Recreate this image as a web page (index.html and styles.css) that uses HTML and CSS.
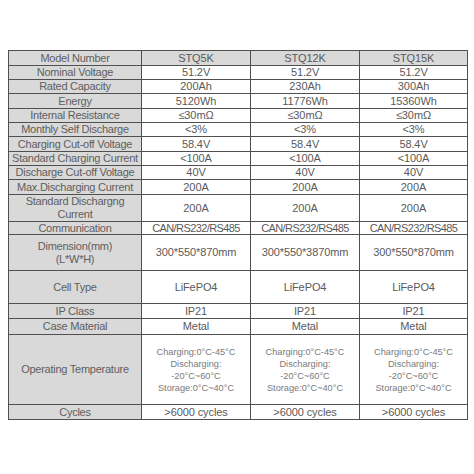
FILE: index.html
```html
<!DOCTYPE html>
<html>
<head>
<meta charset="utf-8">
<link rel="stylesheet" href="styles.css">
</head>
<body>
<div class="spec">
  <div class="c h k r1">Model Number</div><div class="c h r1">STQ5K</div><div class="c h r1">STQ12K</div><div class="c h r1">STQ15K</div>
  <div class="c k">Nominal Voltage</div><div class="c">51.2V</div><div class="c">51.2V</div><div class="c">51.2V</div>
  <div class="c k">Rated Capacity</div><div class="c">200Ah</div><div class="c">230Ah</div><div class="c">300Ah</div>
  <div class="c k">Energy</div><div class="c">5120Wh</div><div class="c">11776Wh</div><div class="c">15360Wh</div>
  <div class="c k">Internal Resistance</div><div class="c">≤30mΩ</div><div class="c">≤30mΩ</div><div class="c">≤30mΩ</div>
  <div class="c k">Monthly Self Discharge</div><div class="c">&lt;3%</div><div class="c">&lt;3%</div><div class="c">&lt;3%</div>
  <div class="c k">Charging Cut-off Voltage</div><div class="c">58.4V</div><div class="c">58.4V</div><div class="c">58.4V</div>
  <div class="c k">Standard Charging Current</div><div class="c">&lt;100A</div><div class="c">&lt;100A</div><div class="c">&lt;100A</div>
  <div class="c k">Discharge Cut-off Voltage</div><div class="c">40V</div><div class="c">40V</div><div class="c">40V</div>
  <div class="c k">Max.Discharging Current</div><div class="c">200A</div><div class="c">200A</div><div class="c">200A</div>
  <div class="c k">Standard Dischargng<br>Current</div><div class="c">200A</div><div class="c">200A</div><div class="c">200A</div>
  <div class="c k">Communication</div><div class="c tight">CAN/RS232/RS485</div><div class="c tight">CAN/RS232/RS485</div><div class="c tight">CAN/RS232/RS485</div>
  <div class="c k">Dimension(mm)<br>(L*W*H)</div><div class="c">300*550*870mm</div><div class="c">300*550*3870mm</div><div class="c">300*550*870mm</div>
  <div class="c k">Cell Type</div><div class="c">LiFePO4</div><div class="c">LiFePO4</div><div class="c">LiFePO4</div>
  <div class="c k">IP Class</div><div class="c">IP21</div><div class="c">IP21</div><div class="c">IP21</div>
  <div class="c k">Case Material</div><div class="c">Metal</div><div class="c">Metal</div><div class="c">Metal</div>
  <div class="c k">Operating Temperature</div>
  <div class="c small">Charging:0°C-45°C<br>Discharging:<br>-20°C~60°C<br>Storage:0°C~40°C</div>
  <div class="c small">Charging:0°C-45°C<br>Discharging:<br>-20°C~60°C<br>Storage:0°C~40°C</div>
  <div class="c small">Charging:0°C-45°C<br>Discharging:<br>-20°C~60°C<br>Storage:0°C~40°C</div>
  <div class="c k">Cycles</div><div class="c">&gt;6000 cycles</div><div class="c">&gt;6000 cycles</div><div class="c">&gt;6000 cycles</div>
</div>
</body>
</html>
```
FILE: styles.css
```css
html, body {
  margin: 0;
  padding: 0;
  background: #ffffff;
}
body {
  padding: 50px 0 0 8px;
  font-family: "Liberation Sans", Arial, sans-serif;
}
.spec {
  display: grid;
  width: 458px;
  grid-template-columns: 132px 108px 108px 107px;
  grid-template-rows: 14px 13px 13px 14px 13px 13px 14px 13px 13px 14px 26px 12px 35px 32px 14px 15px 69px 14px;
  gap: 1px;
  background: #505050;
  border: 1px solid #505050;
}
.c {
  background: #ffffff;
  color: #5a5a5a;
  font-size: 11px;
  letter-spacing: -0.1px;
  line-height: 13px;
  display: flex;
  align-items: center;
  justify-content: center;
  text-align: center;
  white-space: nowrap;
  overflow: visible;
}
.k, .h {
  background: #d9d9d9;
}
.k {
  color: #5e5e5e;
  letter-spacing: -0.25px;
}
.tight {
  letter-spacing: -0.6px;
}
.small {
  font-size: 9.2px;
  line-height: 12px;
  letter-spacing: 0;
  color: #7a7a7a;
}
```
